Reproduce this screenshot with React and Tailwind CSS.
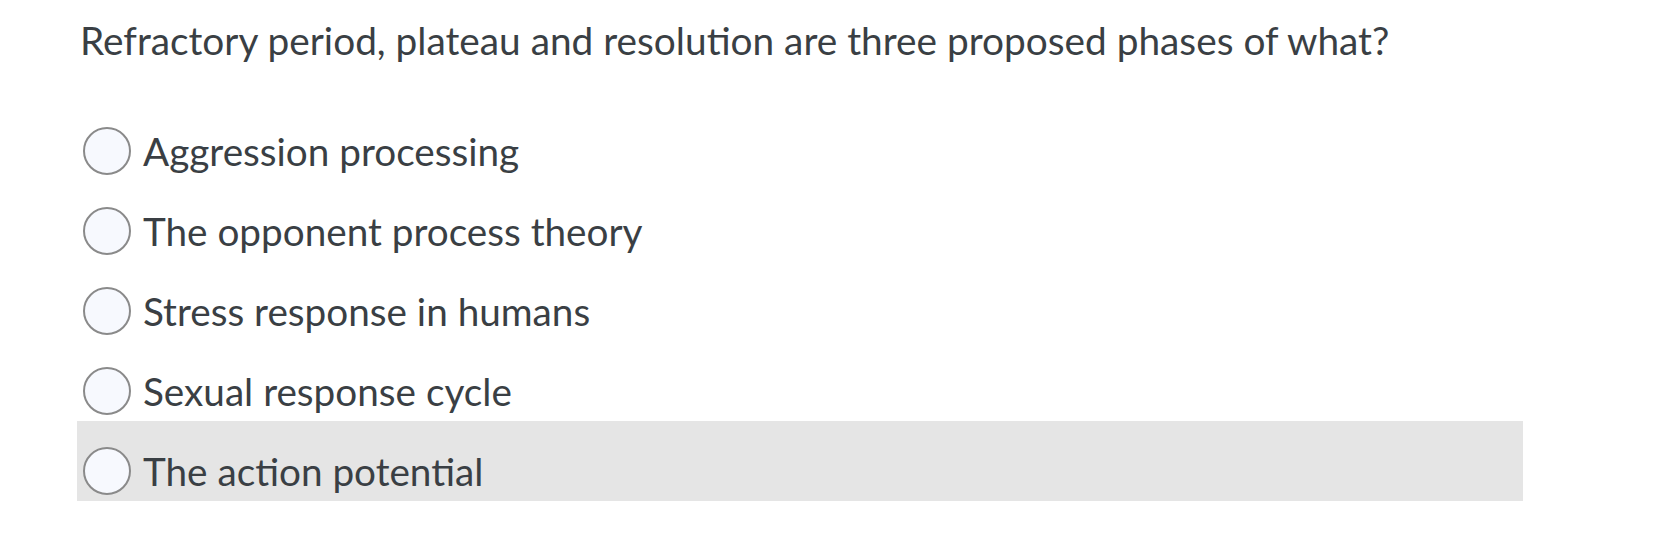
import React from 'react';

const options = [
  'Aggression processing',
  'The opponent process theory',
  'Stress response in humans',
  'Sexual response cycle',
  'The action potential',
];

const App = () => {
  return (
    <div
      className="w-[1654px] h-[560px] bg-white pl-[77px] pt-[16px] text-[#3a3f44]"
      style={{ fontFamily: 'Lato, "Noto Sans", sans-serif' }}
    >
      <h1 className="pl-[3px] text-[38.8px] leading-[48px] font-normal">
        Refractory period, plateau and resolution are three proposed phases of what?
      </h1>
      <ul className="mt-[37px] w-[1446px]">
        {options.map((opt, i) => (
          <li
            key={opt}
            className={`flex items-end h-[80px] pl-[6px] pb-[6px] gap-[12px] ${
              i === options.length - 1 ? 'bg-[#e5e5e5]' : ''
            }`}
          >
            <span className="w-[48px] h-[48px] rounded-full border-2 border-[#8a8a8a] bg-[#f7f9fe] shrink-0" />
            <span className="text-[38.7px] leading-[48px]">{opt}</span>
          </li>
        ))}
      </ul>
    </div>
  );
};

export default App;
